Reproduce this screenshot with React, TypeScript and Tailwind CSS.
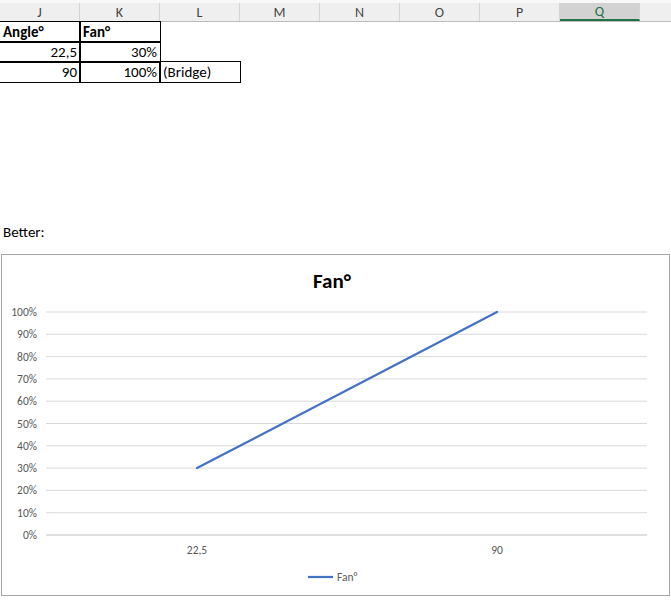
const cols = ['J', 'K', 'L', 'M', 'N', 'O', 'P', 'Q'];
const ticks = [100, 90, 80, 70, 60, 50, 40, 30, 20, 10, 0];

function Cell({children, border, right, bold}: {children?: React.ReactNode; border?: boolean; right?: boolean; bold?: boolean}) {
    return (
        <div
            className={`w-20 h-5 px-[3px] text-[15px] leading-5 whitespace-nowrap ${border ? 'outline outline-1 outline-black -outline-offset-[0.5px]' : ''} ${right ? 'text-right' : ''} ${bold ? 'font-bold' : ''}`}>
            {children}
        </div>
    );
}

export default function App() {
    // chart box origin is (1,254) in page coords
    const y0 = 534 - 254, y100 = 311 - 254;
    const yFor = (v: number) => y0 - (v / 100) * (y0 - y100);
    return (
        <div className="w-[671px] h-[605px] bg-white overflow-hidden text-black"
             style={{fontFamily: 'Calibri, Carlito, "Open Sans", "Liberation Sans", sans-serif'}}>
            {/* column header */}
            <div className="flex h-[22px] bg-[#efefef] border-t-[3px] border-t-[#f8f8f8] border-b border-b-[#bdbdbd]">
                {cols.map((c) => (
                    <div key={c}
                         className={`w-20 shrink-0 flex items-center justify-center text-[14px] border-r border-[#d4d4d4] ${c === 'Q' ? 'bg-[#d2d2d2] text-[#1e6e42] border-b-2 border-b-[#217346]' : 'text-[#444]'}`}>
                        {c}
                    </div>
                ))}
                <div className="flex-1"/>
            </div>

            {/* cells */}
            <div className="flex flex-col">
                <div className="flex">
                    <Cell border bold>Angle°</Cell>
                    <Cell border bold>Fan°</Cell>
                </div>
                <div className="flex">
                    <Cell border right>22,5</Cell>
                    <Cell border right>30%</Cell>
                </div>
                <div className="flex">
                    <Cell border right>90</Cell>
                    <Cell border right>100%</Cell>
                    <Cell border>(Bridge)</Cell>
                </div>
            </div>

            <div className="mt-[140px] pl-[3px] text-[15px] leading-5">Better:</div>

            {/* chart */}
            <div className="ml-px mt-[12px] w-[669px] h-[342px] border border-[#a6a6a6] relative">
                <svg width="667" height="340" className="block" fontFamily='Calibri, Carlito, "Open Sans", "Liberation Sans", sans-serif'>
                    <text x="330" y="33" textAnchor="middle" fontSize="21" fontWeight="bold" fill="#000">Fan°</text>
                    {ticks.map((t) => (
                        <g key={t}>
                            <line x1="44" x2="645" y1={yFor(t)} y2={yFor(t)} stroke={t === 0 ? '#bfbfbf' : '#d9d9d9'} strokeWidth="1"/>
                            <text x="35" y={yFor(t) + 4} textAnchor="end" fontSize="11.5" fill="#595959">{t}%</text>
                        </g>
                    ))}
                    <text x="195" y="299" textAnchor="middle" fontSize="11.5" fill="#595959">22,5</text>
                    <text x="495" y="299" textAnchor="middle" fontSize="11.5" fill="#595959">90</text>
                    <line x1="195" y1={yFor(30)} x2="495" y2={yFor(100)} stroke="#4472c4" strokeWidth="2.25" strokeLinecap="round"/>
                    <line x1="306" x2="331" y1="322" y2="322" stroke="#4472c4" strokeWidth="2.25"/>
                    <text x="335" y="326" fontSize="11.5" fill="#595959">Fan°</text>
                </svg>
            </div>
        </div>
    );
}
